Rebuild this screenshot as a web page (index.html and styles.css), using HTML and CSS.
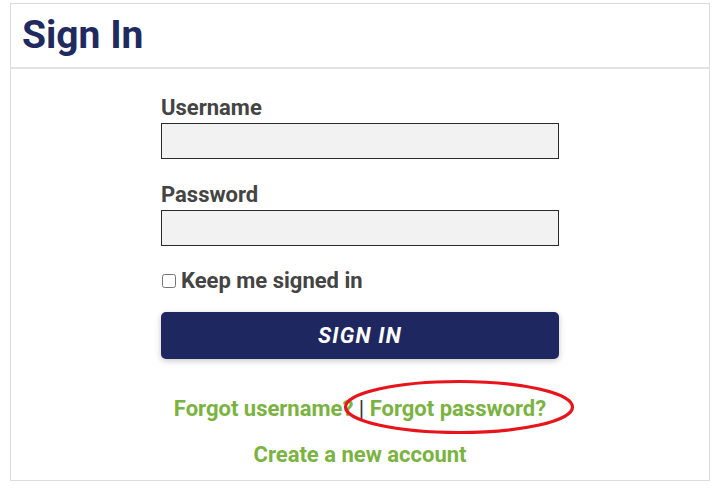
FILE: index.html
```html
<!DOCTYPE html>
<html lang="en">
<head>
<meta charset="utf-8">
<title>Sign In</title>
<link rel="stylesheet" href="styles.css">
</head>
<body>
<div class="card">
  <div class="card-header">
    <h1 class="title">Sign In</h1>
  </div>
  <form class="form">
    <label class="field-label" for="username">Username</label>
    <input class="text-input" id="username" type="text">
    <label class="field-label second" for="password">Password</label>
    <input class="text-input" id="password" type="password">
    <label class="remember"><input class="check" type="checkbox">Keep me signed in</label>
    <button class="submit" type="button">SIGN IN</button>
    <div class="links">
      <div class="link-row"><a class="link" href="#">Forgot username?</a><span class="sep"> | </span><a class="link" href="#">Forgot password?</a></div>
      <div class="link-row"><a class="link" href="#">Create a new account</a></div>
    </div>
  </form>
  <svg class="annotation" width="236" height="60" viewBox="0 0 236 60">
    <ellipse cx="118" cy="30" rx="113.5" ry="25.5" fill="none" stroke="#e8141b" stroke-width="3.2"/>
  </svg>
</div>
</body>
</html>
```

FILE: styles.css
```css
html, body {
  margin: 0;
  padding: 0;
  background: #ffffff;
}
body {
  padding: 3px 10px 0 10px;
  font-family: Roboto, "Liberation Sans", Arial, sans-serif;
}
.card {
  position: relative;
  width: 698px;
  height: 476px;
  border: 1px solid #dcdcdc;
  box-sizing: content-box;
}
.card-header {
  height: 63px;
  border-bottom: 2px solid #e2e2e2;
  padding-left: 11px;
}
.title {
  margin: 0;
  font-size: 39px;
  line-height: 62px;
  font-weight: 700;
  color: #1f2a5f;
}
.form {
  width: 398px;
  margin: 0 auto;
  padding-top: 27px;
  display: flex;
  flex-direction: column;
}
.field-label {
  display: block;
  font-size: 22px;
  line-height: 24px;
  font-weight: 700;
  color: #444444;
  margin-bottom: 3px;
}
.field-label.second {
  margin-top: 24px;
}
.text-input {
  display: block;
  box-sizing: border-box;
  width: 398px;
  height: 36px;
  margin: 0;
  border: 1.5px solid #2b2b2b;
  background: #f2f2f2;
  padding: 0 8px;
  font-size: 16px;
}
.remember {
  display: flex;
  align-items: center;
  margin-top: 23px;
  font-size: 22px;
  line-height: 24px;
  font-weight: 700;
  color: #444444;
}
.check {
  width: 14px;
  height: 14px;
  margin: 0 5px 0 1px;
}
.submit {
  margin-top: 19px;
  height: 47px;
  width: 398px;
  border: none;
  border-radius: 5px;
  background: #1f2761;
  color: #ffffff;
  font-family: Roboto, "Liberation Sans", Arial, sans-serif;
  font-size: 22px;
  font-weight: 700;
  font-style: italic;
  letter-spacing: 1.2px;
  box-shadow: 0 2px 6px rgba(0, 0, 0, 0.22);
  padding: 0;
}
.links {
  margin-top: 27px;
  display: flex;
  flex-direction: column;
  align-items: center;
}
.link-row {
  font-size: 22px;
  line-height: 46px;
  font-weight: 700;
  white-space: nowrap;
}
.link {
  color: #7ab342;
  text-decoration: none;
}
.sep {
  color: #333333;
  font-weight: 400;
}
.annotation {
  position: absolute;
  left: 330px;
  top: 373px;
}
```
